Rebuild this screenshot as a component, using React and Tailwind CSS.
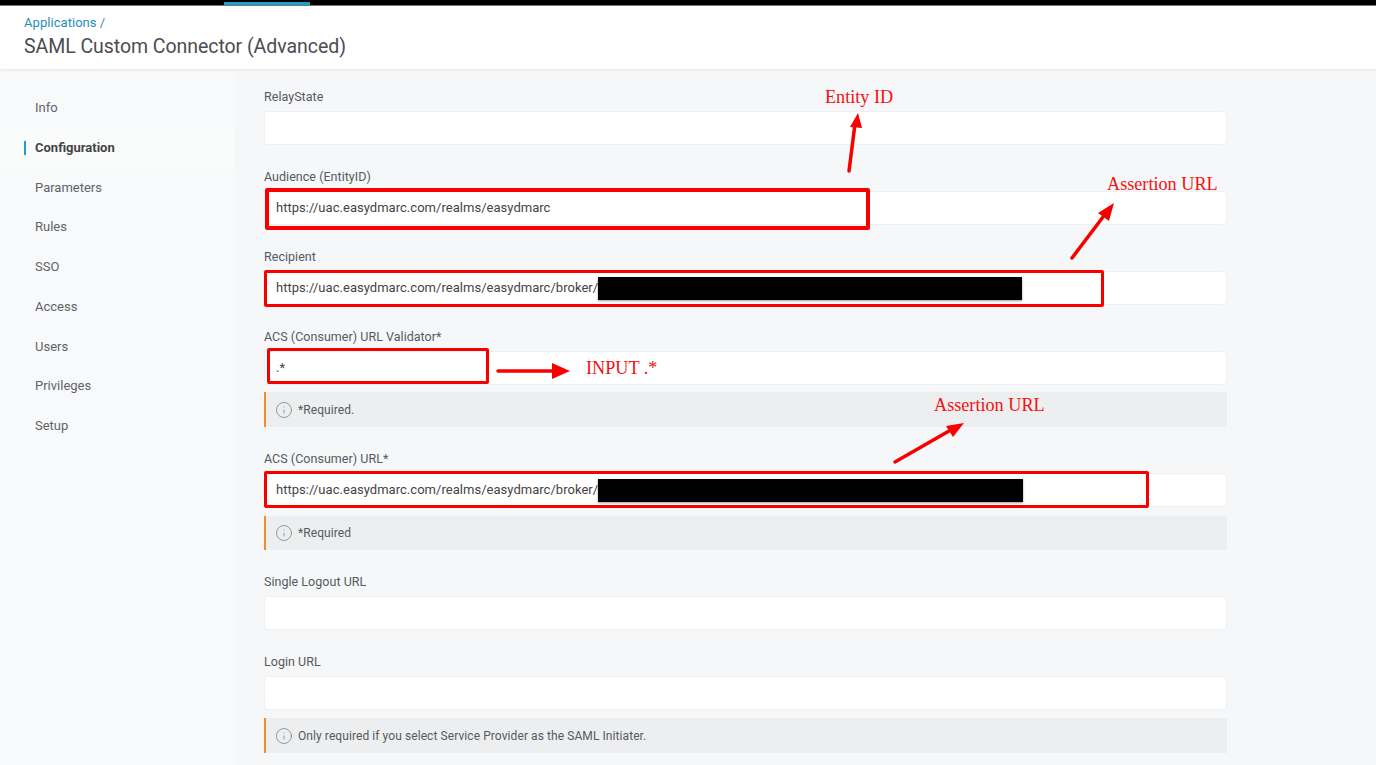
import React from 'react';
import { Info } from 'lucide-react';

const navItems = ['Info', 'Configuration', 'Parameters', 'Rules', 'SSO', 'Access', 'Users', 'Privileges', 'Setup'];

function Field({ label, value, redactedWidth, note, noteClass = 'mt-[7px] h-[35px]', className = 'mb-6' }) {
  return (
    <div className={className}>
      <label className="block h-[15.5px] mb-[6.5px] text-[12.5px] leading-[15px] tracking-[0.03px] text-[#555a60]">{label}</label>
      <div className="h-[34px] px-[11px] flex items-center bg-white border border-[#eef0f2] rounded-sm text-[13px] tracking-[0.03px] text-[#444]">
        {value}
        {redactedWidth && <div className={`h-[23px] bg-black shadow-[0_1px_2px_rgba(0,0,0,0.4)] ${redactedWidth}`} />}
      </div>
      {note && (
        <div className={`${noteClass} pl-[9px] flex items-center gap-[5px] bg-[#edeef0] border-l-2 border-[#f08c2a] text-[12px] tracking-[0.08px] text-[#555a60]`}>
          <Info size={18} strokeWidth={1.1} className="text-[#858585]" />
          <span>{note}</span>
        </div>
      )}
    </div>
  );
}

function RedBox({ className }) {
  return <div className={`absolute border-[#f80000] rounded-[2px] ${className}`} />;
}

function Note({ className, children }) {
  return <span className={`absolute font-['Liberation_Serif',serif] text-[18.2px] leading-6 text-[#f41010] ${className}`}>{children}</span>;
}

export default function App() {
  return (
    <div className="relative h-[765px] w-[1376px] overflow-hidden flex flex-col bg-[#f6f7f9] font-['Roboto',sans-serif]">
      {/* top bar */}
      <div className="h-[6px] shrink-0 bg-black border-b border-[#777]">
        <div className="ml-[224px] w-[86px] h-[5px] pt-[2px]">
          <div className="h-[3px] bg-[#1a9fd0]" />
        </div>
      </div>

      <header className="h-[63px] shrink-0 pl-6 pt-[9px] bg-white shadow-[0_1px_3px_rgba(0,0,0,0.08)] z-10">
        <div className="text-[13px] leading-4 tracking-[0.05px] text-[#1f8fb8]">Applications /</div>
        <h1 className="mt-1 text-[19.5px] leading-6 tracking-[-0.05px] text-[#4a4d52]">SAML Custom Connector (Advanced)</h1>
      </header>

      <div className="flex flex-1 min-h-0">
        <nav className="w-[235px] shrink-0 pt-[19px] bg-[#f8f9fa]">
          {navItems.map((item) => (
            <div
              key={item}
              className={`relative h-[39.75px] pl-[35px] flex items-center text-[13px] ${item === 'Configuration' ? 'font-bold text-[#444] bg-[#fafbfb]' : 'text-[#5f6368]'}`}
            >
              {item === 'Configuration' && <span className="absolute left-6 top-[13px] h-[14px] w-[2px] bg-[#1a9fd0]" />}
              {item}
            </div>
          ))}
        </nav>

        <main className="w-[963px] ml-[29px] pt-5">
          <Field label="RelayState" />
          <Field label="Audience (EntityID)" value="https://uac.easydmarc.com/realms/easydmarc" />
          <Field label="Recipient" value="https://uac.easydmarc.com/realms/easydmarc/broker/" redactedWidth="w-[424px]" />
          <Field label="ACS (Consumer) URL Validator*" value=".*" note="*Required." />
          <Field label="ACS (Consumer) URL*" value="https://uac.easydmarc.com/realms/easydmarc/broker/" redactedWidth="w-[425px]" note="*Required" noteClass="mt-[8.5px] h-[34.5px]" />
          <Field label="Single Logout URL" />
          <Field label="Login URL" note="Only required if you select Service Provider as the SAML Initiater." noteClass="mt-2 h-[35px]" />
        </main>
      </div>

      {/* red annotations drawn on top of the screenshot */}
      <RedBox className="border-4 left-[265px] top-[188px] w-[605px] h-[42px]" />
      <RedBox className="border-[3px] left-[264px] top-[270px] w-[840px] h-[37px]" />
      <RedBox className="border-[3px] left-[267px] top-[348px] w-[222px] h-[36px]" />
      <RedBox className="border-[3px] left-[264px] top-[471px] w-[885px] h-[37px]" />

      <Note className="left-[825px] top-[85px]">Entity ID</Note>
      <Note className="left-[1107px] top-[172px]">Assertion URL</Note>
      <Note className="left-[586px] top-[356px]">INPUT .*</Note>
      <Note className="left-[934px] top-[393px]">Assertion URL</Note>

      <svg className="absolute left-0 top-0 pointer-events-none" width="1376" height="765" fill="none">
        <g stroke="#f80000" strokeWidth="3.5" strokeLinecap="round">
          <path d="M849 171 L855 124" />
          <path d="M1072 258 L1103 217" />
          <path d="M498 371 L555 371" />
          <path d="M895 462 L949 431" />
        </g>
        <g fill="#f80000">
          <path d="M858 113 L850 127 L862 128 Z" />
          <path d="M1114 203 L1098 213 L1109 221 Z" />
          <path d="M570 371 L552 363 L552 379 Z" />
          <path d="M964 423 L946 426 L953 437 Z" />
        </g>
      </svg>
    </div>
  );
}
